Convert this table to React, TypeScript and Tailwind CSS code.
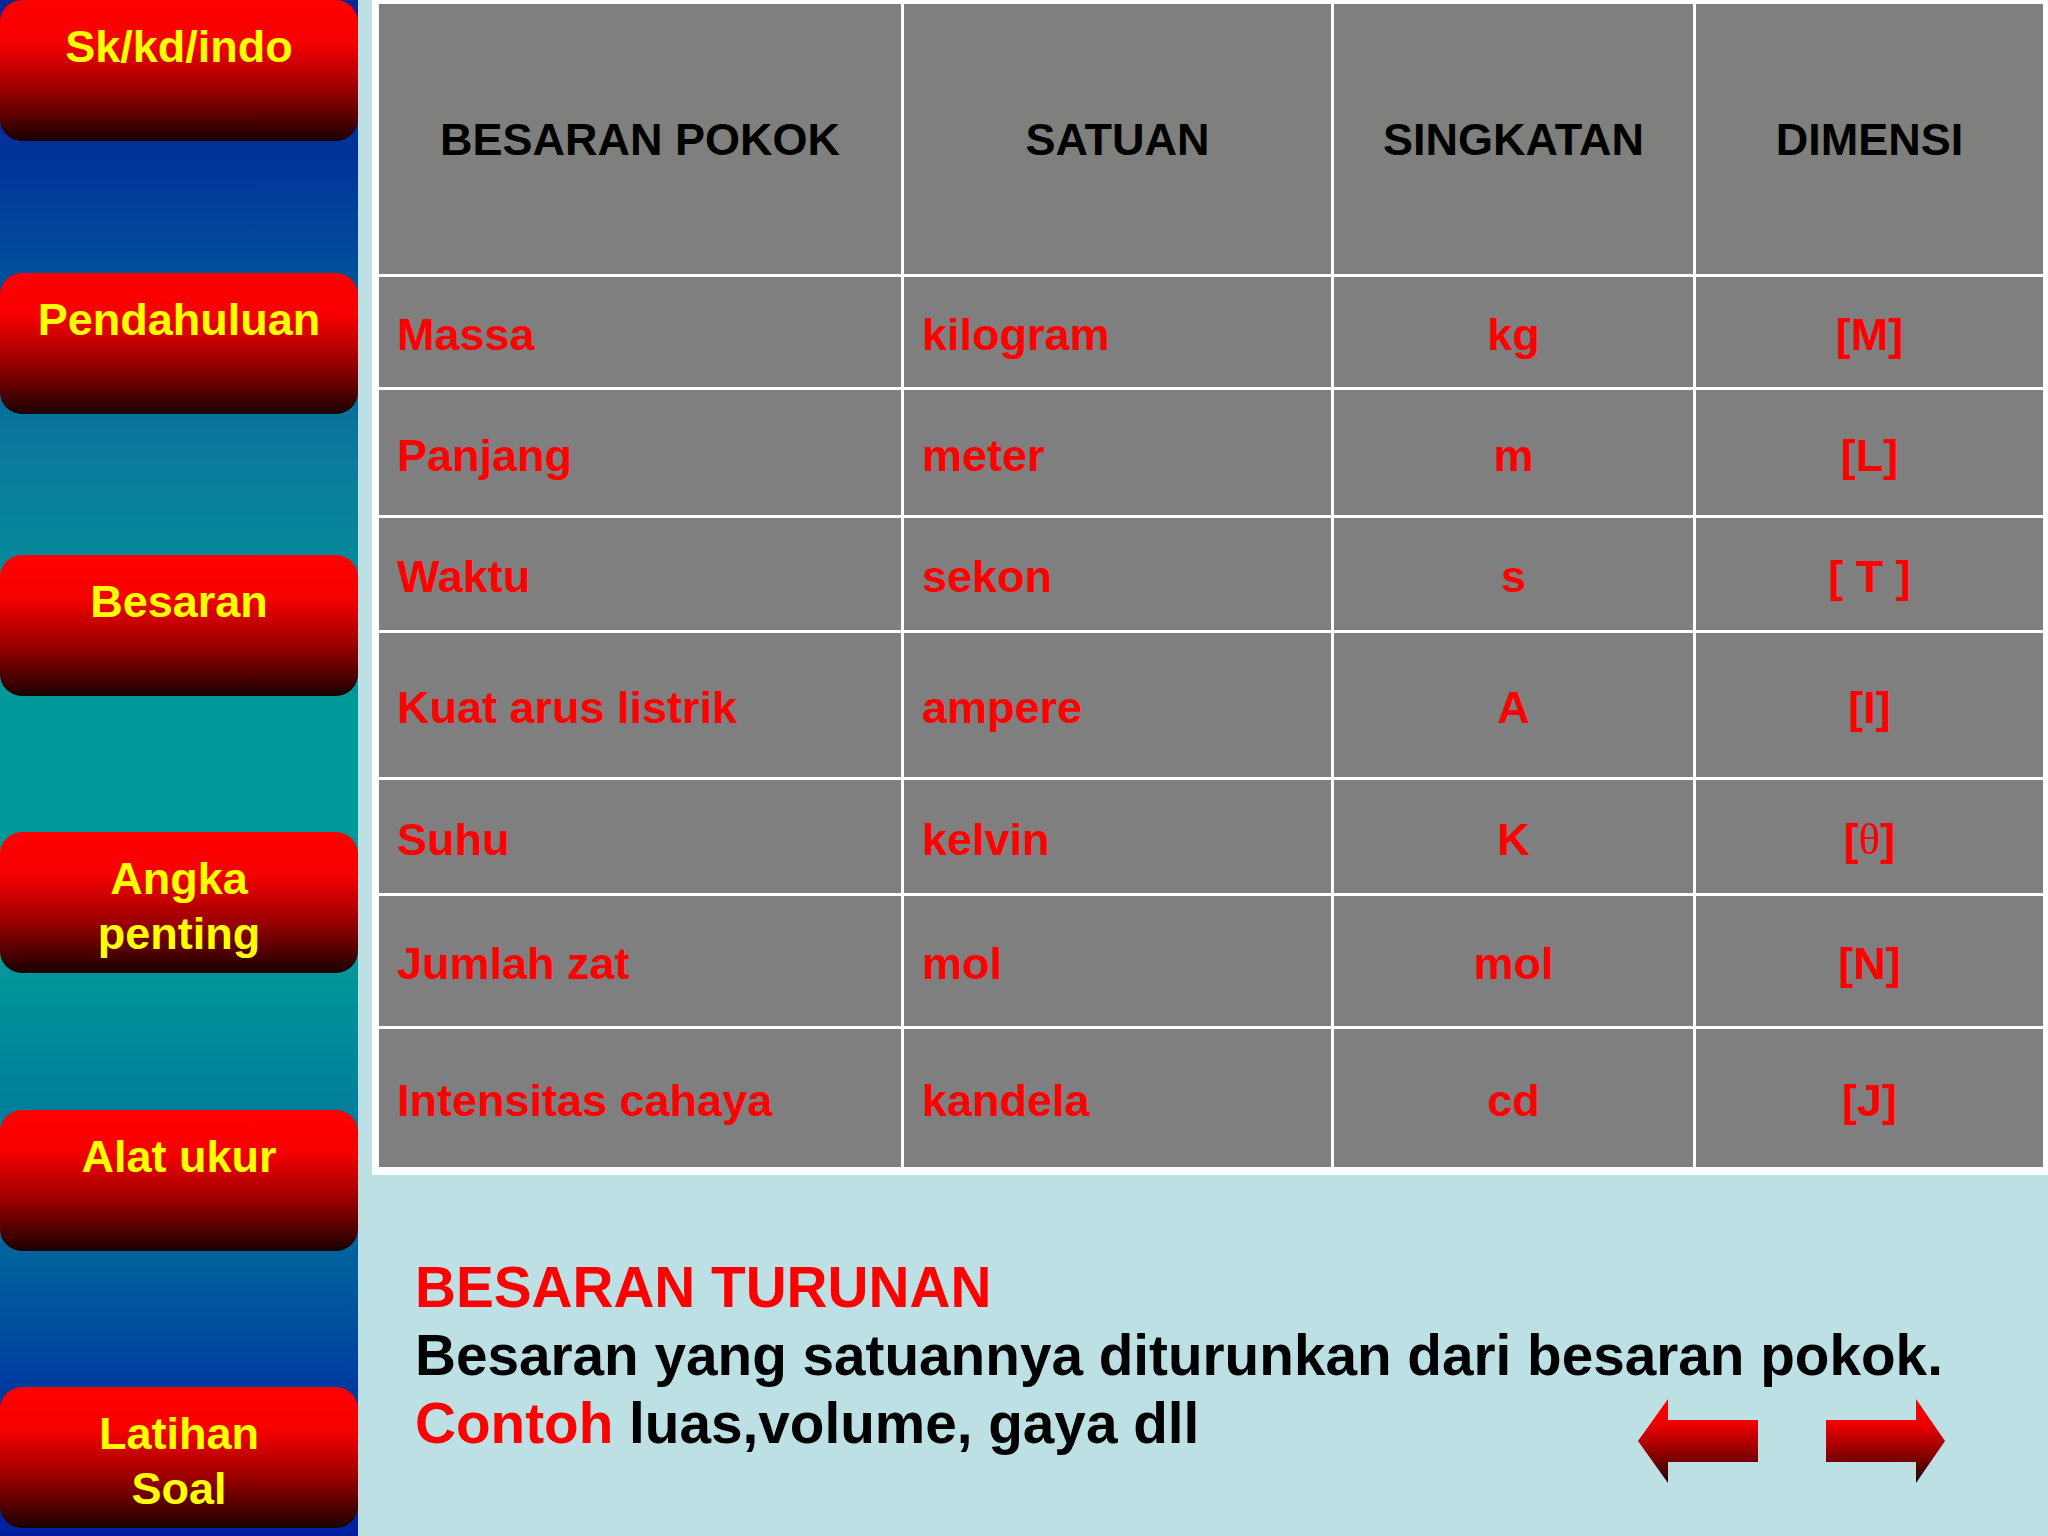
import React from 'react';

const menu = [
  { lines: ['Sk/kd/indo'], mt: 'mt-0' },
  { lines: ['Pendahuluan'], mt: 'mt-[132px]' },
  { lines: ['Besaran'], mt: 'mt-[141px]' },
  { lines: ['Angka', 'penting'], mt: 'mt-[136px]' },
  { lines: ['Alat ukur'], mt: 'mt-[137px]' },
  { lines: ['Latihan', 'Soal'], mt: 'mt-[136px]' },
];

type Row = { name: string; unit: string; abbr: string; dim: React.ReactNode };

const rows: Row[] = [
  { name: 'Massa', unit: 'kilogram', abbr: 'kg', dim: '[M]' },
  { name: 'Panjang', unit: 'meter', abbr: 'm', dim: '[L]' },
  { name: 'Waktu', unit: 'sekon', abbr: 's', dim: '[ T ]' },
  { name: 'Kuat arus listrik', unit: 'ampere', abbr: 'A', dim: '[I]' },
  {
    name: 'Suhu',
    unit: 'kelvin',
    abbr: 'K',
    dim: (
      <>
        [<span className="font-['Liberation_Serif',serif] font-normal">θ</span>]
      </>
    ),
  },
  { name: 'Jumlah zat', unit: 'mol', abbr: 'mol', dim: '[N]' },
  { name: 'Intensitas cahaya', unit: 'kandela', abbr: 'cd', dim: '[J]' },
];

const headers = ['BESARAN POKOK', 'SATUAN', 'SINGKATAN', 'DIMENSI'];

function Arrow({ dir, id }: { dir: 'left' | 'right'; id: string }) {
  const pts =
    dir === 'left'
      ? '0,42 30,0 30,21 120,21 120,63 30,63 30,84'
      : '0,21 90,21 90,0 119,42 90,84 90,63 0,63';
  return (
    <svg width={dir === 'left' ? 120 : 119} height={84} viewBox={`0 0 ${dir === 'left' ? 120 : 119} 84`}>
      <defs>
        <linearGradient id={id} x1="0" y1="0" x2="0" y2="1">
          <stop offset="0%" stopColor="#ff0000" />
          <stop offset="30%" stopColor="#ee0000" />
          <stop offset="72%" stopColor="#7a0000" />
          <stop offset="100%" stopColor="#1a0000" />
        </linearGradient>
      </defs>
      <polygon points={pts} fill={`url(#${id})`} />
    </svg>
  );
}

export default function App() {
  return (
    <div className="w-[2048px] h-[1536px] flex overflow-hidden font-['Liberation_Sans',Arial,sans-serif] font-bold">
      {/* Menu samping */}
      <div className="w-[358px] shrink-0 flex flex-col bg-[linear-gradient(to_bottom,#0a2696_0%,#003399_10%,#00509c_18%,#0a7c9c_30%,#009999_45%,#009999_62%,#00709c_78%,#00509e_86%,#0033a0_92%,#0020a2_100%)]">
        {menu.map((m, i) => (
          <div
            key={i}
            className={`${m.mt} h-[141px] shrink-0 rounded-[22px] pt-[19px] text-center text-[45px] leading-[55px] text-[#ffff00] bg-[linear-gradient(to_bottom,#ff0000_0%,#f60000_30%,#a00000_62%,#5a0000_82%,#1a0000_100%)]`}
          >
            {m.lines.map((l) => (
              <div key={l}>{l}</div>
            ))}
          </div>
        ))}
      </div>

      {/* Konten */}
      <div className="flex-1 flex flex-col bg-[#bde0e4] pl-[14px]">
        <div className="bg-white pl-[7px] pr-[5px] pt-[4px] pb-[8px]">
          <div className="grid grid-cols-[522px_427px_359px_347px] grid-rows-[270px_110px_125px_112px_144px_113px_130px_138px] gap-[3px] text-[45px]">
            {headers.map((h) => (
              <div key={h} className="bg-[#7f807d] flex items-center justify-center pt-[2px] text-black">
                {h}
              </div>
            ))}
            {rows.map((r) => (
              <React.Fragment key={r.name}>
                <div className="bg-[#807f80] flex items-center pl-[18px] pt-[6px] text-[#ff0000]">{r.name}</div>
                <div className="bg-[#807f80] flex items-center pl-[18px] pt-[6px] text-[#ff0000]">{r.unit}</div>
                <div className="bg-[#807f80] flex items-center justify-center pt-[6px] text-[#ff0000]">{r.abbr}</div>
                <div className="bg-[#807f80] flex items-center justify-center pt-[6px] text-[#ff0000] whitespace-pre">{r.dim}</div>
              </React.Fragment>
            ))}
          </div>
        </div>

        {/* Besaran turunan */}
        <div className="pl-[43px] pt-[79px] text-[56.7px] leading-[68px] whitespace-nowrap text-black">
          <div className="text-[#ff0000]">BESARAN TURUNAN</div>
          <div>Besaran yang satuannya diturunkan dari besaran pokok.</div>
          <div className="flex items-start">
            <div>
              <span className="text-[#ff0000]">Contoh</span> luas,volume, gaya dll
            </div>
            <div className="ml-auto mr-[103px] mt-[9px] flex gap-[68px]">
              <Arrow dir="left" id="arrL" />
              <Arrow dir="right" id="arrR" />
            </div>
          </div>
        </div>
      </div>
    </div>
  );
}
